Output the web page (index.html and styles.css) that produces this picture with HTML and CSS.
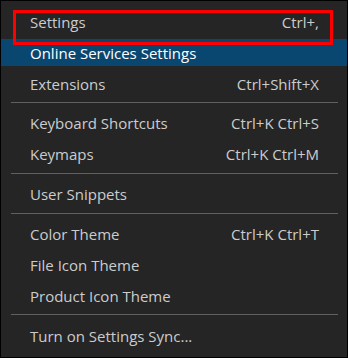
FILE: index.html
```html
<!DOCTYPE html>
<html lang="en">

<head>
    <meta charset="UTF-8">
    <title>Preferences Menu</title>
    <link rel="stylesheet" href="styles.css">
</head>

<body>
    <div class="menu">
        <div class="item"><span>Settings</span><span class="keys">Ctrl+,</span></div>
        <div class="item active"><span>Online Services Settings</span></div>
        <div class="item"><span>Extensions</span><span class="keys">Ctrl+Shift+X</span></div>
        <div class="sep"></div>
        <div class="item"><span>Keyboard Shortcuts</span><span class="keys">Ctrl+K Ctrl+S</span></div>
        <div class="item"><span>Keymaps</span><span class="keys">Ctrl+K Ctrl+M</span></div>
        <div class="sep"></div>
        <div class="item"><span>User Snippets</span></div>
        <div class="sep"></div>
        <div class="item"><span>Color Theme</span><span class="keys">Ctrl+K Ctrl+T</span></div>
        <div class="item"><span>File Icon Theme</span></div>
        <div class="item"><span>Product Icon Theme</span></div>
        <div class="sep"></div>
        <div class="item"><span>Turn on Settings Sync...</span></div>

        <div class="callout"></div>
    </div>
</body>

</html>
```

FILE: styles.css
```css
html,
body {
    margin: 0;
    padding: 0;
    background: #000;
}

.menu {
    position: relative;
    box-sizing: border-box;
    width: 348px;
    height: 358px;
    padding: 7px 0 0;
    border: 1px solid #000;
    background: #252526;
    display: flex;
    flex-direction: column;
    gap: 4px;
    font-family: "Open Sans", sans-serif;
    font-size: 15px;
    color: #cccccc;
}

.item {
    height: 27px;
    flex: none;
    display: flex;
    align-items: center;
    justify-content: space-between;
    padding: 0 28px 0 29px;
}

.item.active {
    background: #094771;
    color: #ffffff;
}

.sep {
    height: 4.8px;
    flex: none;
    position: relative;
}

.sep::after {
    content: "";
    position: absolute;
    left: 10px;
    right: 9px;
    top: 1px;
    height: 1px;
    background: #606060;
}

.callout {
    position: absolute;
    left: 12px;
    top: 9px;
    width: 314px;
    height: 29px;
    border: 3px solid #ff0000;
}
```
